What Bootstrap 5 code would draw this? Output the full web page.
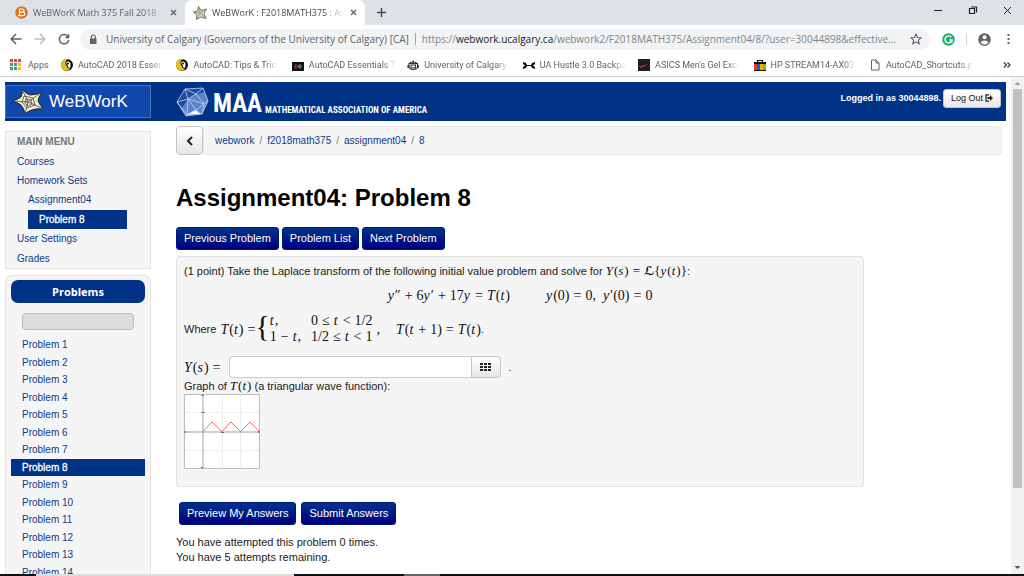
<!DOCTYPE html>
<html lang="en">
<head>
<meta charset="utf-8">
<meta name="viewport" content="width=device-width, initial-scale=1">
<title>WeBWorK : F2018MATH375 : Assignment04 : Problem 8</title>
<link href="https://cdn.jsdelivr.net/npm/bootstrap@5.3.0/dist/css/bootstrap.min.css" rel="stylesheet">
<style>
:root{--navy:#003388;--panel:#f5f5f5;--line:#e3e3e3}
body{font:11px/15px "Liberation Sans",Arial,sans-serif;color:#222;background:#fff;overflow:hidden}
a{color:#0d3a8a;text-decoration:none}
svg{display:block;flex:none}
.chrome{font-family:"Open Sans","Noto Sans",sans-serif;color:#5f6368}
.chrome button{background:none;border:0;padding:0;color:#5f6368}
.tabstrip{background:#dee1e6;height:25px;font-size:9px}
.tab-item{height:25px}
.tab-one{width:185px;padding:0 7px 0 15px;gap:5px}
.tab-two{width:180px;padding:0 8px;gap:5px;background:#fff;border-radius:7px 7px 0 0;color:#45494d}
.fade-text{white-space:nowrap;-webkit-mask-image:linear-gradient(90deg,#000 85%,transparent);mask-image:linear-gradient(90deg,#000 85%,transparent)}
.win-controls{gap:25px;padding-right:12px}
.toolbar-row{height:28px;padding:0 10px;background:#fff}
.omnibox{background:#f1f3f4;border-radius:11px;height:21px;font-size:10px;margin-left:10px;padding:0 8px;min-width:0;white-space:nowrap}
.omnibox .url{color:#80868b}
.omnibox .host{color:#202124}
.vrule{width:1px;height:12px;flex:none;margin:0 6px;background:#a5a8ab}
.vrule-wide{margin:0 11px}
.bookmarks{height:23px;padding:0 13px 0 10px;font:9px/14px Roboto,"Open Sans",sans-serif;border-bottom:1px solid #ccc;box-sizing:content-box}
.bookmarks a{color:#5f6368}
.apps-link{width:51px;gap:7px}
.bm-list{margin-right:32px}
.bm{width:102px;gap:5px}
.viewport{min-height:0}
.page-area{min-width:0;overflow:hidden;padding:5px 5px 0 5px}
.masthead{background:var(--navy);height:39px}
.brand{width:146px;height:33px;background:#1148ad;border:1px solid #4a72b8;color:#fff;font-size:17px;padding-left:6px;gap:5px}
.brand:hover{color:#fff}
.maa{margin-left:25px;color:#fff;font-family:"Liberation Sans Narrow","Roboto Condensed","Liberation Sans",sans-serif;font-weight:700}
.maa-big{font-size:25px;line-height:27px;margin:0 3px 0 4px}
.maa-small{font-size:9px;line-height:14px}
.login-bar{font-size:9px;padding:0 5px 7px 0;gap:2px}
.btn{--bs-btn-font-size:11px;--bs-btn-line-height:15px;--bs-btn-border-radius:3px;font-family:inherit}
.btn-navy{color:#fff;background:linear-gradient(#003388,#000080);border:1px solid #00157c;padding:3px 7px}
.btn-grey{color:#222;background:linear-gradient(#fff,#e6e6e6);border:1px solid #c4c4c4}
.btn-navy:hover{color:#fff;background:#000080}
.logout{--bs-btn-font-size:9px;height:19px;padding:0 7px;gap:2px}
.side{width:146px;flex:none}
.menu-box{margin-top:10px;border:1px solid var(--line);background:var(--panel)}
.menu-box ul{display:grid;grid-auto-rows:1fr;height:136px;padding-left:11px;font-size:10px}
.menu-box li,.prob-list li{display:flex;align-items:center}
.menu-head{font-weight:700;color:#777}
.lvl2{padding-left:11px}
.lvl-active{margin-left:11px;width:99px;padding-left:11px;background:var(--navy)}
.lvl-active a,.on a{color:#fff;-webkit-text-stroke:.3px #fff}
.prob-box{margin-top:6px;border:1px solid var(--line);border-bottom:0;border-radius:7px 7px 0 0;background:var(--panel);padding:4px 5px 0}
.prob-title{background:var(--navy);color:#fff;border-radius:7px;height:23px;font:700 11px/23px "Open Sans",sans-serif;margin:0;text-align:center}
.prog{height:17px;margin:10px 11px 6px;background:#ddd;border:1px solid #bbb;border-radius:4px}
.prob-list{display:grid;grid-auto-rows:1fr;height:245px;font-size:10px}
.prob-list li{padding-left:11px}
.on{background:var(--navy)}
.main-col{padding:5px 4px 0 25px;min-width:0}
.crumbs{height:29px}
.crumbs .btn{width:27px;border-radius:4px}
.crumb-bar{--bs-breadcrumb-item-padding-x:5px;--bs-breadcrumb-divider-color:#777;background:var(--panel);border:1px solid #e8e8e8;border-radius:0 4px 4px 0;padding:0 11px;font-size:10px}
h1{font-size:24px;line-height:30px;font-weight:700;color:#000;margin:28px 0 14px}
.nav-buttons{gap:3px}
.problem{width:83.3%;margin-top:6px;background:var(--panel);border:1px solid var(--line);border-radius:3px;padding:6px 7px 17px}
.m{font-family:"Liberation Serif",serif;font-size:14px;color:#111;white-space:nowrap}
.text-row .m{font-size:13px}
.m i{padding-right:1px}
.rel{margin:0 4px}
.script-l{font-family:"DejaVu Sans",serif;font-size:12px;font-weight:700}
.eq-row{height:32px;gap:36px}
.case-row{height:36px}
.brace{font-size:30px;line-height:30px;margin:-6px 0 0 -4px}
.cases{display:grid;grid-template-columns:auto auto;column-gap:10px;line-height:16px}
.answer{margin-top:9px;height:22px}
.answer label{margin-right:4px}
.answer .form-control{width:243px;flex:none;height:22px;font-size:11px;padding:2px 6px;border-color:#ccc;border-radius:4px 0 0 4px}
.answer .btn{width:30px;padding:0 8px;border-radius:0 4px 4px 0;margin-left:-1px}
.submit-row{margin:15px 0 10px;padding-left:3px;gap:5px}
.scroller{width:13px;flex:none;background:#f1f1f1;padding:0 2px}
.thumb{height:399px;background:#c1c1c1}
.taskline{height:2px;flex:none;background:linear-gradient(90deg,#111 3.5%,#ddd 3.5% 28.7%,#111 28.7% 39.5%,#666 39.5% 43%,#111 43%)}
</style>
</head>
<body>
<div class="d-flex flex-column vh-100">
<header class="chrome">
  <div class="tabstrip d-flex align-items-center">
    <div class="tab-item tab-one d-flex align-items-center">
      <svg width="13" height="13" viewBox="0 0 13 13"><circle cx="6.500" cy="6.500" r="6.200" fill="#e2701b"/><path d="M4.500 3h3a1.600 1.600 0 0 1 0 3.200h-3zm0 3.200H8a1.700 1.700 0 0 1 0 3.500H4.500zM3 9.700h2" fill="none" stroke="#fff" stroke-width="1.200"/></svg>
      <span class="fade-text flex-fill">WeBWorK Math 375 Fall 2018 - </span>
      <button aria-label="Close tab"><svg width="9" height="9"><path d="M2 2l5 5M7 2L2 7" stroke="#5f6368" stroke-width="1.300"/></svg></button>
    </div>
    <div class="tab-item tab-two d-flex align-items-center">
      <svg width="14" height="14" viewBox="0 0 28 28"><path d="M11 1l5 8 11-3-5 9 4 10-11-3-8 5 1-9-7-6 8-2z" fill="#d6d3b8" stroke="#77776a" stroke-width="2"/><path d="M11 1l3 13 13-8M26 25L14 14 7 27M1 12l13 2" stroke="#77776a" fill="none"/></svg>
      <span class="fade-text flex-fill">WeBWorK : F2018MATH375 : As</span>
      <button aria-label="Close tab"><svg width="9" height="9"><path d="M2 2l5 5M7 2L2 7" stroke="#5f6368" stroke-width="1.300"/></svg></button>
    </div>
    <button class="ms-2" aria-label="New tab"><svg width="17" height="13"><path d="M4 6.500h9M8.500 2v9" stroke="#444" stroke-width="1.400"/></svg></button>
    <div class="win-controls d-flex align-items-center ms-auto pb-1">
      <button aria-label="Minimise"><svg width="9" height="9"><path d="M0 4.500h8" stroke="#222"/></svg></button>
      <button aria-label="Restore"><svg width="10" height="9"><path d="M1.500 2.500h5v5h-5zM3 1h5.500v5.500" fill="none" stroke="#222" stroke-width="1.200"/></svg></button>
      <button aria-label="Close"><svg width="9" height="9"><path d="M1 1l7 7M8 1L1 8" stroke="#222"/></svg></button>
    </div>
  </div>
  <div class="toolbar-row d-flex align-items-center">
    <button aria-label="Back"><svg width="12" height="12"><path d="M11.500 6H1.500M6 1L1.200 6 6 11" fill="none" stroke="#5f6368" stroke-width="1.500"/></svg></button>
    <button class="ms-2 ps-1" aria-label="Forward"><svg width="12" height="12"><path d="M.5 6h10M6 1l4.800 5L6 11" fill="none" stroke="#babcbe" stroke-width="1.500"/></svg></button>
    <button class="ms-2 ps-1" aria-label="Reload"><svg width="12" height="12"><path d="M10 3.500A4.700 4.700 0 1 0 10.700 7" fill="none" stroke="#5f6368" stroke-width="1.500"/><path d="M11.300.5v4.700H6.700z" fill="#5f6368"/></svg></button>
    <div class="omnibox d-flex align-items-center flex-fill">
      <svg class="me-2" width="10" height="11"><path d="M2 4.500h6.500V10H2z" fill="#5f6368"/><path d="M3.300 5V3a2 2 0 0 1 4 0v2" fill="none" stroke="#5f6368" stroke-width="1.200"/></svg>
      <span>University of Calgary (Governors of the University of Calgary) [CA]</span>
      <span class="vrule"></span>
      <span class="url flex-fill">https://<span class="host">webwork.ucalgary.ca</span>/webwork2/F2018MATH375/Assignment04/8/?user=30044898&amp;effective...</span>
      <button class="ms-2" aria-label="Bookmark"><svg width="12" height="12" viewBox="0 0 24 24"><path d="M12 2l3 7 7 .6-5.300 4.700 1.600 7.200L12 17.600 5.700 21.500l1.600-7.200L2 9.600 9 9z" fill="none" stroke="#5f6368" stroke-width="2.200"/></svg></button>
    </div>
    <button class="ms-2 ps-1" aria-label="Grammarly"><svg width="13" height="13"><circle cx="6.500" cy="6.500" r="6.200" fill="#17b26a"/><path d="M9.300 4.200A3.500 3.500 0 1 0 10 7H7.200M10 7v2.500" fill="none" stroke="#fff" stroke-width="1.400"/></svg></button>
    <span class="vrule vrule-wide opacity-50"></span>
    <button aria-label="Profile"><svg width="13" height="13"><circle cx="6.500" cy="6.500" r="6.300" fill="#5f6368"/><circle cx="6.500" cy="4.300" r="2" fill="#fff"/><path d="M2.500 9.300Q3.500 7.500 6.500 7.500T10.500 9.300Q9 11.500 6.500 11.500T2.500 9.300" fill="#fff"/></svg></button>
    <button class="ms-3 pe-1" aria-label="Menu"><svg width="3" height="12"><path d="M.5 1h2v2h-2zM.5 5h2v2h-2zM.5 9h2v2h-2z" fill="#5f6368"/></svg></button>
  </div>
  <nav class="bookmarks d-flex align-items-center" aria-label="Bookmarks">
    <a href="#" class="apps-link d-flex align-items-center">
      <svg width="11" height="11"><path d="M0 0h3v3H0zM4 0h3v3H4zM8 0h3v3H8z" fill="#e94335"/><path d="M0 4h3v3H0zM0 8h3v3H0z" fill="#34a853"/><path d="M4 4h3v3H4z" fill="#4285f4"/><path d="M4 8h3v3H4z" fill="#34a853"/><path d="M8 4h3v3H8zM8 8h3v3H8z" fill="#fbbc05"/></svg>Apps</a>
    <div class="bm-list d-flex flex-fill justify-content-between">
      <a href="#" class="bm d-flex align-items-center"><svg width="12" height="12"><circle cx="6" cy="6" r="6" fill="#111"/><path d="M0 6a6 6 0 0 1 7-5.800Q3 2 5 6t4 5A6 6 0 0 1 0 6" fill="#f1bd13"/><path d="M5 3.500Q8 1 9.500 4.500 10 8 8 9.500L6.500 6z" fill="#fff"/><circle cx="7" cy="4.500" r="1" fill="#111"/></svg><span class="fade-text flex-fill">AutoCAD 2018 Essen</span></a>
      <a href="#" class="bm d-flex align-items-center"><svg width="12" height="12"><circle cx="6" cy="6" r="6" fill="#111"/><path d="M0 6a6 6 0 0 1 7-5.800Q3 2 5 6t4 5A6 6 0 0 1 0 6" fill="#f1bd13"/><path d="M5 3.500Q8 1 9.500 4.500 10 8 8 9.500L6.500 6z" fill="#fff"/><circle cx="7" cy="4.500" r="1" fill="#111"/></svg><span class="fade-text flex-fill">AutoCAD: Tips &amp; Tric</span></a>
      <a href="#" class="bm d-flex align-items-center"><svg width="12" height="12"><path d="M0 3h12v9H0z" fill="#111"/><path d="M5 6H3v3h2" stroke="#d33" fill="none"/><path d="M7 6h2v3H7zM5 7.500h3" stroke="#68a" fill="none"/></svg><span class="fade-text flex-fill">AutoCAD Essentials T</span></a>
      <a href="#" class="bm d-flex align-items-center"><svg width="12" height="12"><path d="M2 4.500h8.500V8Q10 10.500 6.200 10.500T2 8zM4 6h4.500v3H4zM1 6v3M11.300 6v3M3 3l2 1.500L6.200 2 7.500 4.500 9.500 3" fill="none" stroke="#333" stroke-width="1.100"/></svg><span class="fade-text flex-fill">University of Calgary</span></a>
      <a href="#" class="bm d-flex align-items-center"><svg width="12" height="12"><path d="M0 3l3 1 1 2h4l1-2 3-1v2L10 6.500l2 1.500v2L9 9 8 7H4L3 9l-3 1V8l2-1.500L0 5z" fill="#111"/></svg><span class="fade-text flex-fill">UA Hustle 3.0 Backpa</span></a>
      <a href="#" class="bm d-flex align-items-center"><svg width="12" height="12"><path d="M0 0h12v12H0z" fill="#1d1d1f"/><path d="M1.500 6l.8 1.500L11 4.500 3 8.800Q1 8.500 1.500 6" fill="#e33"/></svg><span class="fade-text flex-fill">ASICS Men's Gel Exci</span></a>
      <a href="#" class="bm d-flex align-items-center"><svg width="12" height="12"><path d="M3.500 3V1.500h5V3" fill="none" stroke="#111" stroke-width="1.200"/><path d="M0 3h12v2H0z" fill="#111"/><path d="M0 5h3v6H0z" fill="#e53238"/><path d="M3 5h3v6H3z" fill="#0064d2"/><path d="M6 5h3v6H6z" fill="#f5af02"/><path d="M9 5h3v6H9z" fill="#86b817"/><path d="M0 11h12v1H0z" fill="#111"/></svg><span class="fade-text flex-fill">HP STREAM14-AX03</span></a>
      <a href="#" class="bm d-flex align-items-center"><svg width="12" height="12"><path d="M2.500 1H7l3 3v7H2.500zM7 1v3h3" fill="none" stroke="#5f6368"/></svg><span class="fade-text flex-fill">AutoCAD_Shortcuts.p</span></a>
    </div>
    <button aria-label="More bookmarks"><svg width="8" height="8"><path d="M1 1.500L3.500 4 1 6.500M4.500 1.500L7 4 4.500 6.500" fill="none" stroke="#333" stroke-width="1.200"/></svg></button>
  </nav>
</header>

<div class="viewport d-flex flex-fill">
<div class="page-area flex-fill">
  <div class="masthead d-flex align-items-center">
    <a href="#" class="brand d-flex align-items-center">
      <svg width="32" height="27" viewBox="0 0 32 27"><path d="M10 1Q14 6 18 7 24 7 30 4 26 10 26 13 28 18 32 21 24 20 20 22 16 23 13 26 12 20 9 17 5 14 0 13 7 11 9 9 11 5 10 1z" fill="#f4efd0" stroke="#222"/><path d="M10 1l6 13L30 4M0 13l16 1 16 7M13 26l3-12M12 8l9 2 2 7-8 3-5-6zM14 11l5 1 1 4-4 2-3-3z" fill="none" stroke="#444" stroke-width=".8"/></svg>
      <span>WeBWorK</span></a>
    <div class="maa d-flex align-items-end">
      <svg width="33" height="30" viewBox="0 0 33 30"><path d="M9 2L27 1 32 14 26 27 10 29 1 15z" fill="#1d4c9c"/><path d="M12 12L27 7l1 10-8 7-8-5z" fill="#7296d6"/><path d="M20 7L29 5l3 9-6 12-6-2-10 4-5-6 7-10z" fill="#5b82ca"/><path d="M10 28l9-5 6 4z" fill="#fff"/><path d="M9 2L27 1 32 14 26 27 10 29 1 15zM9 2l3 10L1 15l10 13 1-16 8-5L9 2M20 7l7-6M20 7l8 10 4-3M28 17l-2 10-6-4-8-11 16 5M20 23l-10 6M28 17l-8 6" fill="none" stroke="#c6d5ef" stroke-width=".8"/></svg>
      <span class="maa-big">MAA</span><span class="maa-small">MATHEMATICAL ASSOCIATION OF AMERICA</span>
    </div>
    <div class="login-bar ms-auto d-flex align-items-center text-white">
      <b>Logged in as 30044898.</b>
      <button class="btn btn-grey d-flex align-items-center logout">Log Out
        <svg width="8" height="8"><path d="M4 .8H1v6.400h3" fill="none" stroke="#222" stroke-width="1.200"/><path d="M2.500 3h2.500V1l3 3-3 3V5H2.500z" fill="#222"/></svg></button>
    </div>
  </div>

  <div class="d-flex">
    <aside class="side">
      <nav class="menu-box" aria-label="Main menu">
        <ul class="list-unstyled mb-0">
          <li class="menu-head">MAIN MENU</li>
          <li><a href="#">Courses</a></li>
          <li><a href="#">Homework Sets</a></li>
          <li class="lvl2"><a href="#">Assignment04</a></li>
          <li class="lvl-active"><a href="#">Problem 8</a></li>
          <li><a href="#">User Settings</a></li>
          <li><a href="#">Grades</a></li>
        </ul>
      </nav>
      <nav class="prob-box" aria-label="Problems">
        <h2 class="prob-title">Problems</h2>
        <div class="prog"></div>
        <ul class="prob-list list-unstyled mb-0">
          <li><a href="#">Problem 1</a></li>
          <li><a href="#">Problem 2</a></li>
          <li><a href="#">Problem 3</a></li>
          <li><a href="#">Problem 4</a></li>
          <li><a href="#">Problem 5</a></li>
          <li><a href="#">Problem 6</a></li>
          <li><a href="#">Problem 7</a></li>
          <li class="on"><a href="#">Problem 8</a></li>
          <li><a href="#">Problem 9</a></li>
          <li><a href="#">Problem 10</a></li>
          <li><a href="#">Problem 11</a></li>
          <li><a href="#">Problem 12</a></li>
          <li><a href="#">Problem 13</a></li>
          <li><a href="#">Problem 14</a></li>
        </ul>
      </nav>
    </aside>

    <main class="main-col flex-fill">
      <div class="crumbs d-flex">
        <button class="btn btn-grey d-flex align-items-center justify-content-center p-0" aria-label="Back"><svg width="8" height="10"><path d="M6 1L2 5l4 4" fill="none" stroke="#222" stroke-width="2"/></svg></button>
        <ol class="breadcrumb crumb-bar flex-fill align-items-center mb-0">
          <li class="breadcrumb-item"><a href="#">webwork</a></li>
          <li class="breadcrumb-item"><a href="#">f2018math375</a></li>
          <li class="breadcrumb-item"><a href="#">assignment04</a></li>
          <li class="breadcrumb-item"><a href="#">8</a></li>
        </ol>
      </div>
      <h1>Assignment04: Problem 8</h1>
      <div class="d-flex nav-buttons">
        <button class="btn btn-navy">Previous Problem</button>
        <button class="btn btn-navy">Problem List</button>
        <button class="btn btn-navy">Next Problem</button>
      </div>
      <section class="problem">
        <div class="text-row">(1 point) Take the Laplace transform of the following initial value problem and solve for <span class="m"><i>Y</i>(<i>s</i>)<span class="rel">=</span><span class="script-l">ℒ</span>{<i>y</i>(<i>t</i>)}</span>:</div>
        <div class="eq-row m d-flex align-items-center justify-content-center">
          <span><i>y</i>″<span class="rel">+</span>6<i>y</i>′<span class="rel">+</span>17<i>y</i><span class="rel">=</span><i>T</i>(<i>t</i>)</span>
          <span><i>y</i>(0)<span class="rel">=</span>0,&nbsp; <i>y</i>′(0)<span class="rel">=</span>0</span>
        </div>
        <div class="case-row d-flex align-items-center">
          <span class="me-1">Where</span>
          <span class="m"><i>T</i>(<i>t</i>)<span class="rel">=</span></span>
          <span class="m brace">{</span>
          <span class="m cases"><span><i>t</i>,</span><span>0<span class="rel">≤</span><i>t</i><span class="rel">&lt;</span>1/2</span><span>1<span class="rel">−</span><i>t</i>,</span><span>1/2<span class="rel">≤</span><i>t</i><span class="rel">&lt;</span>1</span></span>
          <span class="m ms-1 me-3">,</span>
          <span class="m"><i>T</i>(<i>t</i><span class="rel">+</span>1)<span class="rel">=</span><i>T</i>(<i>t</i>)</span>.
        </div>
        <div class="answer d-flex align-items-center">
          <label for="ans" class="m"><i>Y</i>(<i>s</i>)<span class="rel">=</span></label>
          <input id="ans" class="form-control" type="text">
          <button class="btn btn-grey align-self-stretch d-flex align-items-center justify-content-center" aria-label="Equation editor"><svg width="11" height="9"><path d="M0 0h3v2H0zM4 0h3v2H4zM8 0h3v2H8zM0 3h3v2H0zM4 3h3v2H4zM8 3h3v2H8zM0 6h3v2H0zM4 6h3v2H4zM8 6h3v2H8z" fill="#222"/></svg></button>
          <span class="ms-2">.</span>
        </div>
        <div class="text-row">Graph of <span class="m"><i>T</i>(<i>t</i>)</span> (a triangular wave function):</div>
        <svg width="76" height="75" viewBox="0 0 76 75" role="img" aria-label="Triangular wave"><path d="M.5.5h75v74H.5z" fill="#fff" stroke="#bbb"/><path d="M0 18.500h75M0 56.500h75M38.500 0v75M56.500 0v75" stroke="#ddd" stroke-dasharray="3 1" stroke-width=".7"/><path d="M0 38h76M19 0v75" stroke="#888" stroke-width=".8"/><path d="M17.500 18.500h3M17 73.500h2M17.500 1.500h2M1.500 37v2M37 38.500h3M74.500 37v2" stroke="#666"/><path d="M19 37.500l9-9.500 10 9.500L47 28l9.500 9.500L66 28l9.500 9.500" fill="none" stroke="#f66"/></svg>
      </section>
      <div class="submit-row d-flex">
        <button class="btn btn-navy">Preview My Answers</button>
        <button class="btn btn-navy">Submit Answers</button>
      </div>
      <p class="mb-0">You have attempted this problem 0 times.<br>You have 5 attempts remaining.</p>
    </main>
  </div>
</div>
<div class="scroller d-flex flex-column justify-content-between">
  <div><svg width="9" height="12"><path d="M1.500 8L4.500 5l3 3z" fill="#999"/></svg><div class="thumb"></div></div>
  <svg width="9" height="12"><path d="M1.500 4L4.500 7l3-3z" fill="#555"/></svg>
</div>
</div>
<div class="taskline"></div>
</div>
<script src="https://cdn.jsdelivr.net/npm/bootstrap@5.3.0/dist/js/bootstrap.bundle.min.js"></script>
</body>
</html>
